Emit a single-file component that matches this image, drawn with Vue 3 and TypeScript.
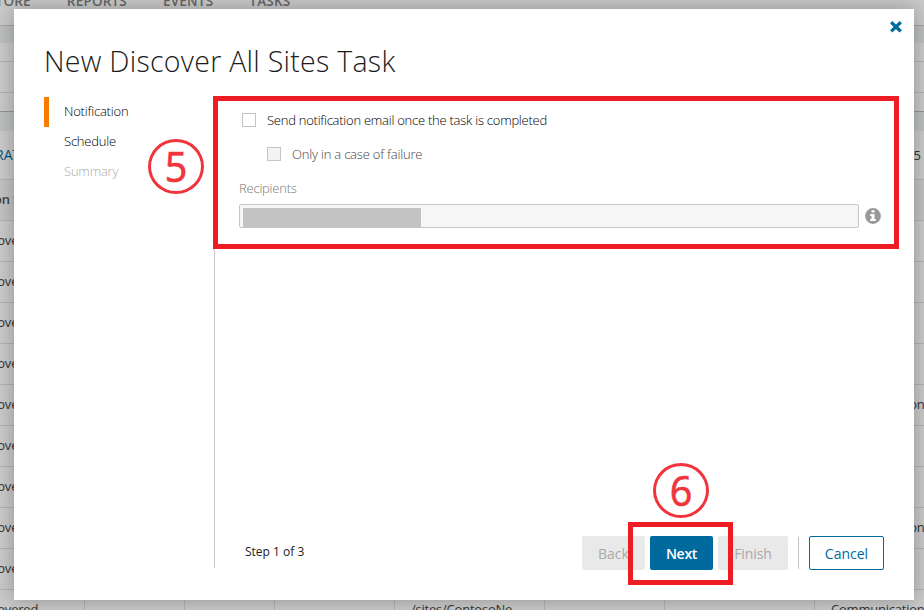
<script setup lang="ts">
interface Step {
  label: string
  state: 'active' | 'ready' | 'disabled'
}

const navItems: string[] = ['STORE', 'REPORTS', 'EVENTS', 'TASKS']

const steps: Step[] = [
  { label: 'Notification', state: 'active' },
  { label: 'Schedule', state: 'ready' },
  { label: 'Summary', state: 'disabled' },
]

const lastColumn: string[] = ['', '', '', '', 'Communication', '', '', 'Communication', '', 'Communication']
const rows = lastColumn.map((kind, index) => ({
  status: 'Discovered',
  site: index === 9 ? '/sites/ContosoNe' : '',
  kind,
}))
</script>

<template>
  <div class="screen">
    <div class="page">
      <nav class="nav">
        <span v-for="item in navItems" :key="item">{{ item }}</span>
      </nav>
      <div class="tools"><div></div><div></div><div></div></div>
      <div class="section"><span class="section-name">RAT</span><span>5</span></div>
      <div class="row head"><div class="cell first">on S</div></div>
      <div v-for="(row, i) in rows" :key="i" class="row">
        <div class="cell first"><span>{{ row.status }}</span></div>
        <div class="cell"></div>
        <div class="cell"></div>
        <div class="cell"></div>
        <div class="cell">{{ row.site }}</div>
        <div class="cell"></div>
        <div class="cell"></div>
        <div class="cell">{{ row.kind }}</div>
      </div>
    </div>

    <section class="dialog" role="dialog">
      <button class="close" aria-label="Close">
        <svg width="12" height="12" viewBox="0 0 12 12">
          <path d="M2.4 2.4 9.6 9.2M9.6 2.4 2.4 9.2" stroke="#006a9e" stroke-width="3.3" stroke-linecap="square" fill="none" />
        </svg>
      </button>
      <h1>New Discover All Sites Task</h1>
      <div class="body">
        <ul class="steps">
          <li v-for="step in steps" :key="step.label" :class="step.state">{{ step.label }}</li>
        </ul>
        <div class="content">
          <div class="check"><i></i><span>Send notification email once the task is completed</span></div>
          <div class="check nested"><i></i><span>Only in a case of failure</span></div>
          <div class="caption">Recipients</div>
          <div class="field-line">
            <div class="field"><div class="redacted"></div></div>
            <svg width="16" height="16" viewBox="0 0 16 16">
              <circle cx="8" cy="8" r="7.9" fill="#999" />
              <path d="M6.5 2.3h3v2.3h-3zM5.2 6h4.3v5h1.3v2H5.2v-2h1.3V8H5.2z" fill="#fff" />
            </svg>
          </div>
          <footer>
            <span class="progress">Step 1 of 3</span>
            <button class="btn back">Back</button>
            <button class="btn next">Next</button>
            <button class="btn finish">Finish</button>
            <span class="divider"></span>
            <button class="btn cancel">Cancel</button>
          </footer>
        </div>
      </div>
    </section>

    <div class="mark mark-form"></div>
    <div class="mark mark-next"></div>
    <div class="badge badge-five"><span>5</span></div>
    <div class="badge badge-six"><span>6</span></div>
  </div>
</template>

<style>
body {
  margin: 0;
}
</style>

<style scoped>
.screen {
  position: relative;
  width: 924px;
  height: 610px;
  overflow: hidden;
  font-family: 'Open Sans', 'Noto Sans', sans-serif;
  font-size: 13px;
  color: #333;
  white-space: nowrap;
}
.screen * {
  box-sizing: border-box;
}
.page {
  height: 610px;
  overflow: hidden;
  background: #c9c9c9;
}
.nav {
  display: flex;
  gap: 36px;
  height: 26px;
  margin-left: -12px;
  border-bottom: 1px solid #a3a3a3;
  font-size: 13.5px;
  font-weight: 600;
  letter-spacing: 0.2px;
  line-height: 18px;
  color: #666;
}
.nav span {
  margin-top: -8px;
}
.tools {
  height: 105px;
  padding: 17px 0 19px;
  background: #bdbfbf;
}
.tools div {
  height: 19px;
  background: #c9c9c9;
  border-bottom: 1px solid #afafaf;
}
.tools div:nth-child(2) {
  height: 31px;
}
.tools div:nth-child(3) {
  border-bottom-color: #929292;
}
.section {
  display: flex;
  justify-content: space-between;
  align-items: center;
  height: 49px;
  padding: 0 3px 1px 0;
  margin-left: -5px;
  border-bottom: 1px solid #b2b2b2;
}
.section-name {
  font-size: 14px;
  color: #00557f;
}
.row {
  display: grid;
  grid-template-columns: 85px 100px 90px 120px 150px 120px 150px 140px;
  height: 41px;
  border-bottom: 1px solid #b2b2b2;
}
.row.head {
  background: #c2c2c2;
  font-weight: 600;
  color: #444;
}
.row.head .cell {
  margin-left: -6px;
}
.cell {
  display: flex;
  align-items: center;
  padding: 0 0 2px 16px;
  border-right: 1px solid #b2b2b2;
  letter-spacing: -0.22px;
}
.cell.first {
  padding-left: 0;
}
.cell.first span {
  margin-left: -27px;
}
.dialog {
  position: absolute;
  left: 14px;
  top: 9px;
  width: 900px;
  height: 591px;
  padding: 34px 30px 32px;
  background: #fff;
  box-shadow: 0 0 18px rgba(0, 0, 0, 0.28);
  display: flex;
  flex-direction: column;
}
button {
  font: inherit;
  padding: 0;
  margin: 0;
}
.close {
  position: absolute;
  top: 12px;
  right: 12px;
  width: 12px;
  height: 12px;
  border: 0;
  background: none;
}
.close svg {
  display: block;
}
h1 {
  margin: 0;
  height: 54px;
  font-size: 28.5px;
  font-weight: 300;
  letter-spacing: 0.28px;
  line-height: 36px;
  color: #1c1c1c;
}
.body {
  display: flex;
  flex: 1;
}
.steps {
  width: 171px;
  margin: 0;
  padding: 0;
  list-style: none;
  border-right: 1px solid #c9c9c9;
}
.steps li {
  height: 30px;
  padding-left: 15px;
  border-left: 5px solid transparent;
  line-height: 28px;
  font-weight: 300;
  letter-spacing: -0.2px;
  color: #000;
}
.steps .active {
  border-left-color: #f57c00;
}
.steps .disabled {
  color: #aaa;
}
.content {
  flex: 1;
  display: flex;
  flex-direction: column;
  padding-top: 13px;
}
.check {
  display: flex;
  align-items: center;
  gap: 11px;
  height: 20px;
  padding-left: 27px;
  font-weight: 300;
  letter-spacing: -0.25px;
  color: #000;
}
.check i {
  width: 14px;
  height: 14px;
  border: 1px solid #c4c4c4;
}
.check.nested {
  margin-top: 14px;
  padding-left: 52px;
  letter-spacing: -0.2px;
  color: #444;
}
.check.nested i {
  background: #f4f4f4;
}
.caption {
  margin: 14px 0 6px 24px;
  height: 20px;
  line-height: 20px;
  font-weight: 300;
  letter-spacing: -0.22px;
  color: #777;
}
.field-line {
  display: flex;
  align-items: center;
  gap: 6px;
  padding-left: 24px;
}
.field {
  width: 620px;
  height: 24px;
  padding: 3px 0 0 3px;
  border: 1px solid #c6c6c6;
  border-radius: 2px;
  background: #f6f6f6;
}
.redacted {
  width: 178px;
  height: 19px;
  background: #c3c3c3;
}
footer {
  display: flex;
  align-items: center;
  height: 34px;
  margin-top: auto;
  margin-bottom: -2px;
  padding-left: 30px;
}
.progress {
  width: 337px;
  font-weight: 400;
  font-size: 12px;
  color: #222;
  line-height: 30px;
  margin-top: -2px;
}
.btn {
  height: 34px;
  border: 0;
  border-radius: 2px;
  font-size: 14px;
  background: #e9e9e9;
  color: #aaa;
}
.back,
.next {
  width: 63px;
  margin-right: 5px;
}
.next {
  background: #006a9e;
  color: #fff;
  font-weight: 600;
  letter-spacing: -0.3px;
}
.finish {
  width: 70px;
  letter-spacing: -0.1px;
}
.divider {
  width: 1px;
  height: 32px;
  margin: 0 10px;
  background: #c4c4c4;
}
.cancel {
  width: 75px;
  border: 1px solid #006a9e;
  background: #fff;
  color: #006a9e;
}
.mark {
  position: absolute;
  border: 5px solid #ee1c23;
}
.mark-form {
  left: 213px;
  top: 96px;
  width: 686px;
  height: 153px;
}
.mark-next {
  left: 628px;
  top: 522px;
  width: 105px;
  height: 63px;
}
.badge {
  position: absolute;
  display: flex;
  justify-content: center;
  align-items: center;
  width: 56px;
  height: 55px;
  padding-bottom: 2px;
  border: 3px solid #f1343c;
  border-radius: 50%;
  font-family: 'Open Sans', sans-serif;
  font-size: 42px;
  font-weight: 400;
  line-height: 49px;
  color: #f1343c;
  -webkit-text-stroke: 0.7px #f1343c;
}
.badge span {
  transform: scaleX(0.94);
}
.badge-five {
  left: 148px;
  top: 139px;
}
.badge-six {
  left: 653px;
  top: 463px;
}
</style>
